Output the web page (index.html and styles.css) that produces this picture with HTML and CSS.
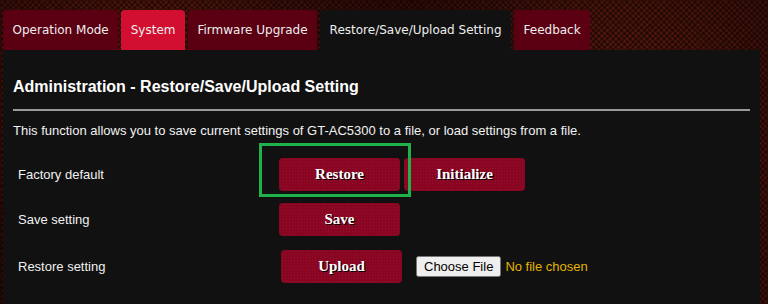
FILE: index.html
```
<!DOCTYPE html>
<html lang="en">
<head>
    <meta charset="UTF-8">
    <title>Administration - Restore/Save/Upload Setting</title>
    <link rel="stylesheet" href="styles.css">
</head>
<body>

    <ul class="tabs">
        <li class="tab">Operation Mode</li>
        <li class="tab tab-red">System</li>
        <li class="tab">Firmware Upgrade</li>
        <li class="tab tab-on">Restore/Save/Upload Setting</li>
        <li class="tab">Feedback</li>
    </ul>

    <div class="panel">
        <h2 class="title">Administration - Restore/Save/Upload Setting</h2>
        <div class="line"></div>
        <p class="desc">This function allows you to save current settings of GT-AC5300 to a file, or load settings from a file.</p>

        <div class="row row1">
            <div class="label">Factory default</div>
            <div class="acts">
                <button class="btn">Restore</button>
                <button class="btn">Initialize</button>
            </div>
            <div class="mark"></div>
        </div>
        <div class="row row2">
            <div class="label">Save setting</div>
            <div class="acts">
                <button class="btn">Save</button>
            </div>
        </div>
        <div class="row row3">
            <div class="label">Restore setting</div>
            <div class="acts">
                <button class="btn btn-up">Upload</button>
                <input type="file" class="file">
            </div>
        </div>
    </div>

</body>
</html>
```

FILE: styles.css
```
html,body,ul,li,h2,p{
    margin: 0;
    padding: 0;
}

ul,li{
    list-style: none;
}

body{
    height: 304px;
    overflow: hidden;
    font-family: "Liberation Sans", Arial, sans-serif;
    color: #fff;
    background-color: #2e0a06;
    background-image:
        repeating-linear-gradient(45deg, rgba(0,0,0,.35) 0 2px, transparent 2px 4px),
        repeating-linear-gradient(-45deg, rgba(0,0,0,.35) 0 2px, transparent 2px 4px),
        radial-gradient(circle at 20% 10%, #55170c 0, transparent 40%),
        radial-gradient(circle at 80% 20%, #56180d 0, transparent 35%),
        radial-gradient(circle at 100% 80%, #45110a 0, transparent 40%);
}

/* tabs */
.tabs{
    display: flex;
    gap: 3px;
    padding: 10px 0 0 3px;
}

.tab{
    height: 40px;
    line-height: 40px;
    padding: 0 9.5px;
    font-family: "DejaVu Sans", Verdana, sans-serif;
    font-size: 12px;
    color: #eee;
    background-color: #5a0012;
    border-radius: 4px 4px 0 0;
}

.tab-red{
    background-color: #d20f30;
}

.tab-on{
    background-color: #111;
}

/* panel */
.panel{
    margin: 0 8px 0 3px;
    height: 254px;
    padding: 0 10px;
    background-color: #111;
}

.title{
    padding-top: 27px;
    height: 20px;
    line-height: 20px;
    font-size: 16px;
    font-weight: bold;
}

.line{
    margin-top: 12px;
    height: 2px;
    background-color: #9a9a9a;
}

.desc{
    margin-top: 12px;
    font-size: 13px;
    line-height: 16px;
    color: #f2f2f2;
}

.row{
    display: flex;
    align-items: center;
    position: relative;
    padding-left: 5px;
}

.row1{
    margin-top: 19px;
}

.row2{
    margin-top: 12px;
}

.row3{
    margin-top: 14px;
}

.label{
    width: 261px;
    font-size: 13px;
    color: #f0f0f0;
}

.acts{
    display: flex;
    align-items: center;
    gap: 4px;
}

.btn{
    width: 121px;
    height: 33px;
    border: 0;
    border-radius: 4px;
    background-color: #8a0522;
    background-image: radial-gradient(rgba(255,255,255,.05) 1px, transparent 1px);
    background-size: 3px 3px;
    color: #fff;
    font-family: "Liberation Serif", "Times New Roman", serif;
    font-size: 15px;
    font-weight: bold;
    text-shadow: 1px 1px 0 #000;
}

.btn-up{
    margin-left: 2px;
    margin-right: 10px;
}

.file{
    font-family: "Liberation Sans", Arial, sans-serif;
    font-size: 13px;
    color: #e2b400;
}

.mark{
    position: absolute;
    left: 246px;
    top: -15px;
    width: 146px;
    height: 48px;
    border: 3px solid #1fb14a;
}
```
